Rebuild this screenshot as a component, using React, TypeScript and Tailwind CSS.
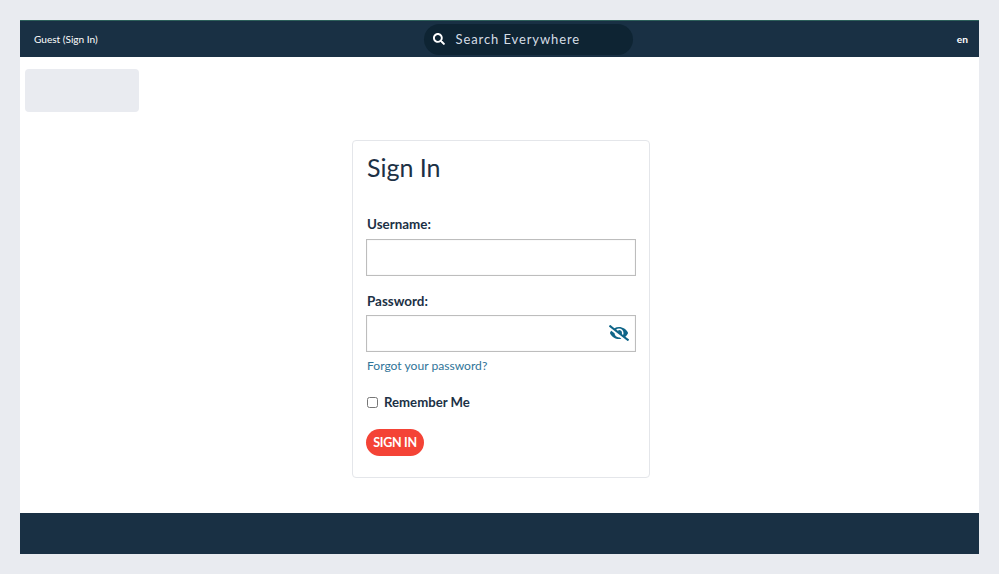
import { FaSearch, FaEyeSlash } from "react-icons/fa"

export default function App() {
  return (
    <div className="flex h-[574px] flex-col bg-[#e9ebf0] px-5 py-5 font-['Lato','Noto_Sans',sans-serif] text-[#1c3145]">
      <header className="grid h-[37px] shrink-0 grid-cols-[1fr_209px_1fr] items-center border-t border-[#2c5f5a] bg-[#193044] pr-[11px] pl-3.5 text-white">
        <a className="mt-px text-[10.1px]">Guest (Sign In)</a>
        <div className="ml-[27px] flex h-[31px] w-[209px] items-center rounded-full bg-[#0e2433] pl-[9px]">
          <FaSearch className="h-3 w-3 text-white" />
          <span className="mt-px ml-[11px] text-[13px] tracking-[0.9px] text-[#d5dde6]">Search Everywhere</span>
        </div>
        <span className="mt-px text-right text-[10.2px] font-bold">en</span>
      </header>

      <main className="flex flex-1 flex-col bg-white">
        <div className="mt-3 ml-[5px] h-[43px] w-[114px] rounded bg-[#e9ebf0]" />

        <form className="mt-7 ml-[332px] flex h-[338px] w-[298px] flex-col rounded border border-[#e4e6ea] px-[13px]">
          <h1 className="mt-[9px] ml-px text-[25px] leading-[34px]">Sign In</h1>

          <label className="mt-[30px] ml-px text-[13.4px] leading-[20px] font-bold">Username:</label>
          <input type="text" className="mt-[5px] h-[37px] w-full border border-[#bdbdbd] shadow-[inset_0_0_1px_#ccc]" />

          <label className="mt-[15px] ml-px text-[13.4px] leading-[20px] font-bold">Password:</label>
          <div className="relative mt-1">
            <input type="password" className="h-[37px] w-full border border-[#bdbdbd] shadow-[inset_0_0_1px_#ccc]" />
            <FaEyeSlash className="absolute top-[9px] right-[7px] h-[18px] w-[20px] text-[#0f6588]" />
          </div>

          <a className="mt-1.5 ml-px text-[12.1px] leading-[16px] text-[#2f7498]">Forgot your password?</a>

          <label className="mt-[19px] flex items-center text-[13.2px] leading-[18px] font-bold">
            <input type="checkbox" className="mr-1.5 ml-px h-[11px] w-[11px]" />
            Remember Me
          </label>

          <button type="button" className="mt-[18px] h-[27px] w-[58px] rounded-full bg-[#f44336] pt-px text-[12.5px] font-bold tracking-[-0.3px] text-white">
            SIGN IN
          </button>
        </form>

        <div className="flex-1" />
      </main>

      <footer className="h-[41px] shrink-0 bg-[#193044]" />
    </div>
  )
}
